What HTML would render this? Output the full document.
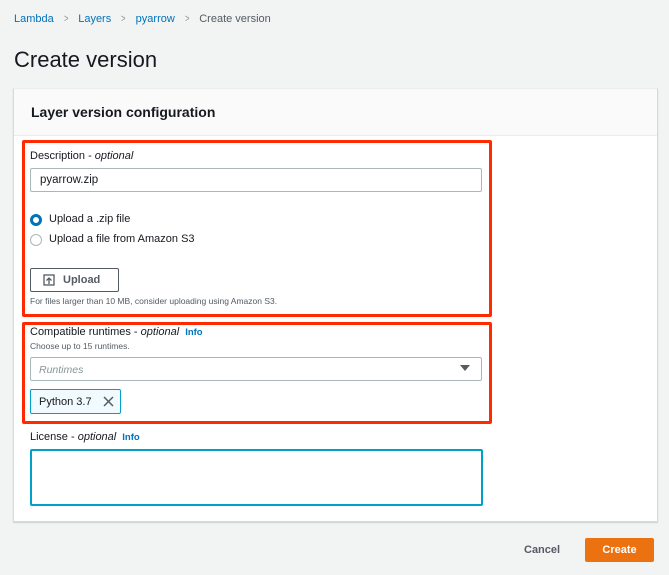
<!DOCTYPE html>
<html><head><style>
*{box-sizing:border-box;margin:0;padding:0}
body{width:669px;height:575px;background:#f2f3f3;font-family:"Liberation Sans",sans-serif;color:#16191f;position:relative;overflow:hidden;font-size:11px}
.a{position:absolute}
.bc{top:13px;left:14px;font-size:11px;color:#545b64;white-space:nowrap}
.bc a{color:#0073bb;text-decoration:none}
.bc .s{color:#879596;margin:0 9px;display:inline-block;transform:scaleX(.7)}
h1{position:absolute;left:14px;top:47px;font-size:22px;font-weight:normal;color:#16191f}
.card{left:13px;top:88px;width:645px;height:434px;background:#fff;border:1px solid #d5dbdb;border-top-color:#eaeded;box-shadow:0 1px 1px rgba(0,0,0,.15)}
.hd{left:0;top:0;width:643px;height:47px;background:#fafafa;border-bottom:1px solid #eaeded;font-weight:bold;font-size:14px;padding:15px 0 0 17px}
.red{border:3px solid #ff2a00;border-radius:2px}
.inp{border:1px solid #aab7b8;border-radius:2px;background:#fff}
i{font-style:italic}
.info{color:#0073bb;font-weight:bold;font-size:9.5px;margin-left:6px}
</style></head><body>
<div class="a bc"><a>Lambda</a><span class="s">&gt;</span><a>Layers</a><span class="s">&gt;</span><a>pyarrow</a><span class="s">&gt;</span>Create version</div>
<h1>Create version</h1>
<div class="a card">
<div class="a hd">Layer version configuration</div>
</div>
<div class="a red" style="left:22px;top:140px;width:470px;height:177px"></div>
<div class="a red" style="left:22px;top:322px;width:470px;height:102px"></div>
<div class="a" style="left:30px;top:150px">Description - <i>optional</i></div>
<div class="a inp" style="left:30px;top:168px;width:452px;height:24px;padding:5px 0 0 9px;font-size:11.5px">pyarrow.zip</div>
<div class="a" style="left:30px;top:214px;width:12px;height:12px;border-radius:50%;border:3.5px solid #0073bb;background:#fff"></div>
<div class="a" style="left:49px;top:213px;font-size:11px">Upload a .zip file</div>
<div class="a" style="left:30px;top:234px;width:12px;height:12px;border-radius:50%;border:1px solid #aab7b8;background:#fff"></div>
<div class="a" style="left:49px;top:233px;font-size:11px">Upload a file from Amazon S3</div>
<div class="a" style="left:30px;top:268px;width:89px;height:24px;border:1px solid #545b64;border-radius:2px;background:#fff;font-weight:bold;color:#545b64;padding:5px 0 0 32px">Upload</div>
<svg class="a" style="left:43px;top:274px" width="12" height="12" viewBox="0 0 12 12" fill="none" stroke="#545b64" stroke-width="1.3"><rect x="1" y="1" width="10" height="10"/><path d="M6 10V4M3.5 6.5L6 4l2.5 2.5"/></svg>
<div class="a" style="left:30px;top:296px;font-size:8.5px;color:#545b64">For files larger than 10 MB, consider uploading using Amazon S3.</div>
<div class="a" style="left:30px;top:326px">Compatible runtimes - <i>optional</i><span class="info">Info</span></div>
<div class="a" style="left:30px;top:341px;font-size:8.5px;color:#545b64">Choose up to 15 runtimes.</div>
<div class="a inp" style="left:30px;top:357px;width:452px;height:24px;padding:6px 0 0 8px;color:#879596;font-style:italic;font-size:10.5px">Runtimes</div>
<div class="a" style="left:460px;top:365px;width:0;height:0;border-left:5px solid transparent;border-right:5px solid transparent;border-top:6px solid #545b64"></div>
<div class="a" style="left:30px;top:389px;width:91px;height:25px;border:1px solid #00a1c9;border-radius:2px;background:#f1faff;padding:6px 0 0 8px;font-size:11px">Python 3.7</div>
<svg class="a" style="left:103px;top:396px" width="11" height="11" viewBox="0 0 11 11" stroke="#545b64" stroke-width="1.5"><path d="M1 1L10 10M10 1L1 10"/></svg>
<div class="a" style="left:30px;top:431px">License - <i>optional</i><span class="info">Info</span></div>
<div class="a" style="left:30px;top:449px;width:453px;height:57px;border:2px solid #00a1c9;border-radius:2px;background:#fff"></div>
<div class="a" style="left:524px;top:544px;font-weight:bold;color:#545b64;font-size:11px">Cancel</div>
<div class="a" style="left:585px;top:538px;width:69px;height:24px;background:#ec7211;border-radius:2px;color:#fff;font-weight:bold;text-align:center;padding-top:6px">Create</div>
</body></html>
